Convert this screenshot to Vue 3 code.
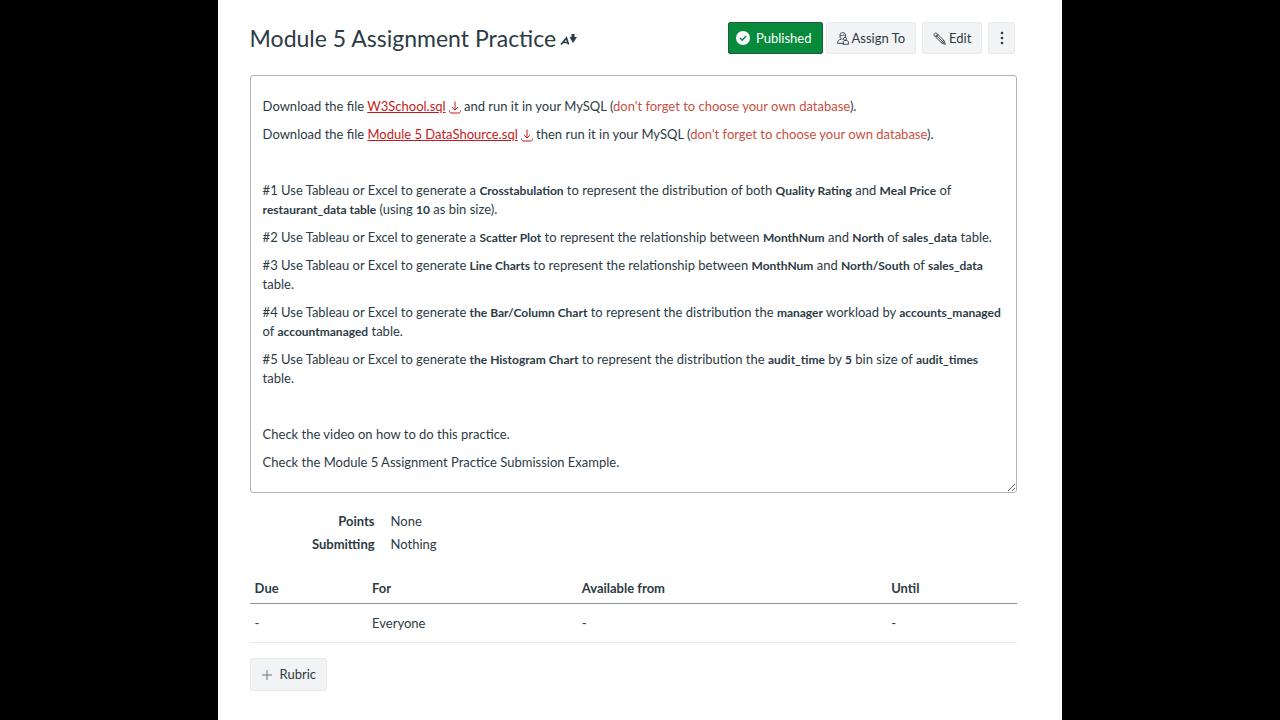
<script setup>
const prefix = 'Use Tableau or Excel to generate'
const files = [
  { name: 'W3School.sql', action: 'and run it in your MySQL' },
  { name: 'Module 5 DataShource.sql', action: 'then run it in your MySQL' },
]
const tasks = [
  [['a '], ['Crosstabulation', 1], [' to represent the distribution of both '], ['Quality Rating', 1], [' and '], ['Meal Price', 1], [' of '], ['restaurant_data table', 1], [' (using '], ['10', 1], [' as bin size).']],
  [['a '], ['Scatter Plot', 1], [' to represent the relationship between '], ['MonthNum', 1], [' and '], ['North', 1], [' of '], ['sales_data', 1], [' table.']],
  [['Line Charts', 1], [' to represent the relationship between '], ['MonthNum', 1], [' and '], ['North/South', 1], [' of '], ['sales_data', 1], [' table.']],
  [['the Bar/Column Chart', 1], [' to represent the distribution the '], ['manager', 1], [' workload by '], ['accounts_managed', 1], [' of '], ['accountmanaged', 1], [' table.']],
  [['the Histogram Chart', 1], [' to represent the distribution the '], ['audit_time', 1], [' by '], ['5', 1], [' bin size of '], ['audit_times', 1], [' table.']],
]
</script>

<template>
  <main class="page">
    <header class="head">
      <div class="title">
        <h1>Module 5 Assignment Practice</h1>
        <svg class="a11y" width="18" height="14" viewBox="0 0 18 14" aria-hidden="true">
          <path d="M1 11.500 6.500 5 8.500 11.500M3.500 9.500h5" fill="none" stroke="#2d3b45" stroke-width="1.700" />
          <path d="M11.500 1h3v3h2.500l-4 6-3.500-6h2z" fill="#2d3b45" />
        </svg>
      </div>
      <div class="actions">
        <button class="btn published" type="button">
          <svg width="14" height="14" viewBox="0 0 14 14" aria-hidden="true">
            <circle cx="7" cy="7" r="7" fill="#fff" />
            <path d="m4 7 2.200 2.200L10.200 5" fill="none" stroke="#078a3c" stroke-width="1.500" />
          </svg>
          <span>Published</span>
        </button>
        <button class="btn assign" type="button">
          <svg width="12" height="13" viewBox="0 0 12 13" fill="none" stroke="#2d3b45" stroke-width="0.900" aria-hidden="true">
            <path d="M3 5V3.200C3 1.500 4 .6 5.700.6s2.800.9 2.800 2.600V5M3 3.600c1.500.3 3.500-.2 4-1 .3.600.8 1 1.500 1M3 5c.3 1.300 1.200 2.200 2.500 2.200M4 7.200C1.800 7.700.6 8.700.6 11.400H7" />
            <circle cx="8" cy="6.800" r="1.600" />
            <path d="M6.200 12.300V10c0-.9.800-1.500 2.500-1.500s2.700.6 2.700 1.500v2.300z" />
          </svg>
          <span>Assign To</span>
        </button>
        <button class="btn edit" type="button">
          <svg width="13" height="13" viewBox="0 0 13 13" fill="none" stroke="#2d3b45" stroke-width="0.900" aria-hidden="true">
            <path d="M1 3.300C.4 2.400 2.300.4 3.300 1l7.800 7.700 1.300 3.700-3.700-1.300zM2.200 4.500l2.300-2.300M3.300 3.400l7.800 7.900M3 5.200 5.300 3M8.700 11.100c0-1 1.400-2.400 2.400-2.400" />
          </svg>
          <span>Edit</span>
        </button>
        <button class="btn more" type="button" aria-label="More options">
          <svg width="4" height="14" viewBox="0 0 4 14" fill="#2d3b45" aria-hidden="true">
            <circle cx="2" cy="2" r="1.300" /><circle cx="2" cy="7" r="1.300" /><circle cx="2" cy="12" r="1.300" />
          </svg>
        </button>
      </div>
    </header>

    <section class="description">
      <p v-for="f in files" :key="f.name">
        Download the file <a href="#">{{ f.name }}</a>
        <a class="dl" href="#" :aria-label="'Download ' + f.name"><svg width="12" height="13" viewBox="0 0 12 13" fill="none" stroke="#c31b1b" stroke-width="1" aria-hidden="true">
          <path d="M6 .5v8.500M3 6.200 6 9l3-2.800M.5 9.500c0 1.800.7 2.500 2.200 2.500h6.600c1.500 0 2.200-.7 2.200-2.500" />
        </svg></a>
        {{ f.action }} (<span class="warn">don't forget to choose your own database</span>).
      </p>
      <p>&nbsp;</p>
      <p v-for="(t, i) in tasks" :key="i">#{{ i + 1 }} {{ prefix }}&#32;<template v-for="(s, j) in t" :key="j"><strong v-if="s[1]">{{ s[0] }}</strong><template v-else>{{ s[0] }}</template></template></p>
      <p>&nbsp;</p>
      <p>Check the video on how to do this practice.</p>
      <p>Check the Module 5 Assignment Practice Submission Example.</p>
    </section>

    <dl class="details">
      <dt>Points</dt><dd>None</dd>
      <dt>Submitting</dt><dd>Nothing</dd>
    </dl>

    <table class="dates">
      <thead>
        <tr><th scope="col">Due</th><th scope="col">For</th><th scope="col">Available from</th><th scope="col">Until</th></tr>
      </thead>
      <tbody>
        <tr><td>-</td><td>Everyone</td><td>-</td><td>-</td></tr>
      </tbody>
    </table>

    <button class="btn rubric" type="button">
      <svg width="12" height="12" viewBox="0 0 12 12" stroke="#6b7780" stroke-width="1" aria-hidden="true"><path d="M6 1v10M1 6h10" /></svg>
      <span>Rubric</span>
    </button>
  </main>
</template>

<style>
body { background: #000; }
</style>

<style scoped>
.page {
  box-sizing: border-box;
  width: 66%;
  min-height: 100vh;
  margin: 0 auto;
  padding: 22px 45px 28px 32px;
  background: #fff;
  color: #2d3b45;
  font: 13px/19px Lato, "Liberation Sans", sans-serif;
}
.head, .title, .actions { display: flex; align-items: center; }
.head { justify-content: space-between; margin-bottom: 21px; padding-right: 2px; }
.title { gap: 4px; }
.a11y { margin-top: 3px; }
h1 { margin: 0; font-size: 23px; line-height: 32px; font-weight: 400; }
.actions { gap: 6px; }
.btn {
  box-sizing: border-box;
  display: inline-flex;
  align-items: center;
  justify-content: center;
  height: 32px;
  padding: 0 10px;
  border: 1px solid #e8eaec;
  border-radius: 2px;
  background: #f2f3f4;
  color: #2d3b45;
  font: inherit;
  gap: 3px;
}
.published { padding: 0 10px 0 7px; border-color: #1b5f3a; background: #078a3c; color: #fff; gap: 6px; }
.assign { margin-left: -3px; }
.more { width: 27px; padding: 0; }
.description {
  box-sizing: border-box;
  padding: 21px 12px 20px;
  border: 1px solid #b0b4b7;
  border-radius: 3px;
  overflow: auto;
  resize: vertical;
}
p { margin: 0 0 9px; }
p:last-child { margin-bottom: 0; }
strong { font-size: 12px; line-height: 1; font-weight: 700; }
a { color: #c31b1b; }
.dl { margin-left: 3px; text-decoration: none; }
.dl svg { vertical-align: -3px; }
.warn { color: #c84f43; }
.details {
  display: grid;
  grid-template-columns: 125px 1fr;
  gap: 4px 16px;
  margin: 19px 0 20px;
}
dt { font-weight: 700; text-align: right; }
dd { margin: 0; }
.dates { width: 100%; table-layout: fixed; border-collapse: collapse; margin-bottom: 15px; }
th, td { padding: 5px; text-align: left; }
th { border-bottom: 1px solid #8b9196; font-weight: 700; }
td { padding: 10px 5px 9px; border-bottom: 1px solid #e8eaec; }
th:nth-child(1) { width: 14%; }
th:nth-child(2) { width: 26%; }
th:nth-child(3) { width: 39%; }
.rubric { height: 33px; padding: 0 10px; gap: 7px; }
</style>
